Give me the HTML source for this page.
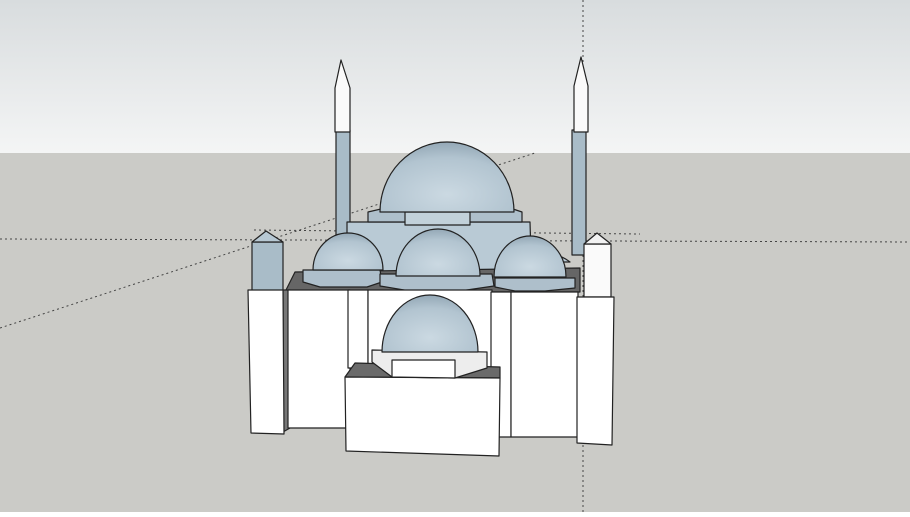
<!DOCTYPE html><html><head><style>body{margin:0;width:910px;height:512px;overflow:hidden}</style></head><body>
<svg width="910" height="512" viewBox="0 0 910 512" xmlns="http://www.w3.org/2000/svg">
<defs>
<linearGradient id="sky" x1="0" y1="0" x2="0" y2="1"><stop offset="0" stop-color="#d8dcde"/><stop offset="1" stop-color="#f4f5f5"/></linearGradient>
<radialGradient id="dome" cx="0.5" cy="0.75" r="0.75"><stop offset="0" stop-color="#cbd9e2"/><stop offset="0.7" stop-color="#b2c4d0"/><stop offset="1" stop-color="#94a8b6"/></radialGradient>
</defs>
<rect width="910" height="153" fill="url(#sky)"/>
<rect y="153" width="910" height="359" fill="#cbcbc7"/>
<g stroke="#444" stroke-width="1" stroke-dasharray="2,3" fill="none">
<line x1="0" y1="328" x2="535" y2="153"/>
<line x1="0" y1="239" x2="910" y2="242"/>
<line x1="254" y1="230" x2="640" y2="234"/>
<line x1="583" y1="0" x2="583" y2="512"/>
</g>
<g stroke="#222" stroke-width="1.2" stroke-linejoin="round">
<rect x="336" y="130" width="14" height="105" fill="#a9bcc8"/>
<polygon points="341,60 335,88 335,132 350,132 350,88" fill="#fafafa"/>
<rect x="572" y="130" width="14" height="125" fill="#a9bcc8"/>
<polygon points="581,57 574,86 574,132 588,132 588,86" fill="#fafafa"/>
<polygon points="347,222 530,222 532,290 347,292" fill="#b9cad5"/>
<path d="M528,262 A36,40 0 0 1 570,262 Z" fill="url(#dome)"/>
<polygon points="368,212 385,208 510,208 522,212 522,222 368,222" fill="#aebfcb"/>
<polygon points="405,212 470,212 470,225 405,225" fill="#c2d1da"/>
<path d="M380,212 A67,70 0 0 1 514,212 Z" fill="url(#dome)"/>
<polygon points="295,272 580,268 580,292 285,292" fill="#666"/>
<polygon points="303,270 380,270 382,282 367,287 320,287 303,282" fill="#aebfcb"/>
<path d="M313,270 A35,37 0 0 1 383,270 Z" fill="url(#dome)"/>
<polygon points="380,274 492,274 494,286 460,291 410,291 380,286" fill="#aebfcb"/>
<path d="M396,276 A42,47 0 0 1 480,276 Z" fill="url(#dome)"/>
<polygon points="495,278 575,278 575,288 545,291 515,291 495,287" fill="#aebfcb"/>
<path d="M494,277 A36,41 0 0 1 566,277 Z" fill="url(#dome)"/>
<rect x="252" y="242" width="31" height="50" fill="#a9bcc8"/>
<polygon points="252,242 266,231 283,242" fill="#b7c8d3"/>
<rect x="584" y="244" width="27" height="53" fill="#fafafa"/>
<polygon points="584,244 597,233 611,244" fill="#f2f2f2"/>
<polygon points="283,290 290,290 290,428 283,432" fill="#777"/>
<rect x="288" y="290" width="62" height="138" fill="#fff"/>
<rect x="348" y="290" width="20" height="78" fill="#fff"/>
<rect x="368" y="290" width="124" height="78" fill="#fff"/>
<rect x="491" y="292" width="20" height="145" fill="#fff"/>
<rect x="511" y="292" width="67" height="145" fill="#fff"/>
<polygon points="248,290 283,290 284,434 251,433" fill="#fff"/>
<polygon points="577,297 614,297 612,445 577,443" fill="#fff"/>
<polygon points="345,377 355,363 500,367 500,378" fill="#6a6a6a"/>
<polygon points="345,377 500,378 499,456 346,451" fill="#fff"/>
<polygon points="372,350 487,352 487,368 455,378 392,377 372,362" fill="#ededed"/>
<polygon points="392,360 455,360 455,378 392,377" fill="#fff"/>
<path d="M382,352 A48,57 0 0 1 478,352 Z" fill="url(#dome)"/>
</g>
</svg>
</body></html>
